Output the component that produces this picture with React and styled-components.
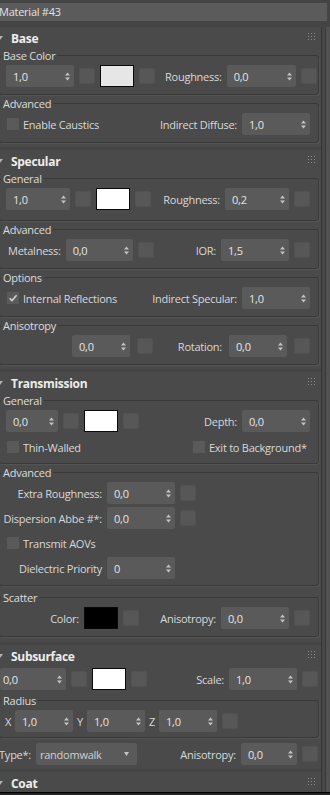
import React from 'react';
import styled, { createGlobalStyle } from 'styled-components';

const GlobalStyle = createGlobalStyle`
  html, body {
    margin: 0;
    padding: 0;
    background: #444444;
  }
  body {
    font-family: "Open Sans", "Noto Sans", sans-serif;
    font-size: 11px;
    letter-spacing: -0.25px;
    color: #dadada;
  }
`;

const Editor = styled.div`
  width: 330px;
  height: 795px;
  display: flex;
  flex-direction: column;
  overflow: hidden;
  background: #444444;
`;

const NameField = styled.div`
  flex-shrink: 0;
  height: 18px;
  margin: 3px 3px 0 0;
  background: #5b5b5b;
  line-height: 18px;
  color: #e2e2e2;
  text-indent: -1px;
`;

const Main = styled.div`
  flex: 1;
  min-height: 0;
  display: flex;
  margin-top: 6px;
`;

const Panels = styled.div`
  width: 321px;
  flex-shrink: 0;
  display: flex;
  flex-direction: column;
  gap: 3px;
  overflow: hidden;
`;

const ScrollTrack = styled.div`
  flex: 1;
  display: flex;
  justify-content: flex-end;
  border-left: 1px solid #333333;
  background: #474747;
`;

const ScrollThumb = styled.div`
  width: 4px;
  border-left: 1px solid #3a3a3a;
  background: #515151;
`;

const BottomEdge = styled.div`
  flex-shrink: 0;
  height: 2px;
  border-top: 1px solid #000000;
  background: #232323;
`;

/* rollouts */

const RolloutBox = styled.section`
  flex-shrink: 0;
  background: #4a4a4a;
  padding-bottom: ${p => p.$pb ?? 4}px;
  overflow: hidden;
`;

const RolloutHeader = styled.div`
  height: 22px;
  display: flex;
  align-items: center;
  padding-right: 6px;
`;

const Twisty = styled.span`
  width: 0;
  height: 0;
  border-left: 3.5px solid transparent;
  border-right: 3.5px solid transparent;
  border-top: 4px solid #b4b4b4;
  margin-left: -3px;
  margin-right: 8px;
`;

const RolloutTitle = styled.span`
  font-size: 12px;
  font-weight: 700;
  letter-spacing: -0.3px;
  color: #ededed;
`;

const GripIcon = styled.svg`
  margin-left: auto;
  align-self: flex-start;
  margin-top: 6px;
`;

const Grip = () => (
  <GripIcon width="7" height="7" viewBox="0 0 7 7">
    {[0, 3, 6].map(y =>
      [0, 3, 6].map(x => <rect key={`${x}-${y}`} x={x} y={y} width="1" height="1" fill="#8c8c8c" />)
    )}
  </GripIcon>
);

const Rollout = ({ title, pb, children }) => (
  <RolloutBox $pb={pb}>
    <RolloutHeader>
      <Twisty />
      <RolloutTitle>{title}</RolloutTitle>
      <Grip />
    </RolloutHeader>
    {children}
  </RolloutBox>
);

/* group boxes */

const GroupBox = styled.fieldset`
  min-width: 0;
  margin: ${p => p.$mt}px 2px 0 -1px;
  padding: 3px 0 ${p => p.$pb}px 0;
  border: 1px solid #393939;
  border-radius: 3px;
  box-shadow: 1px 1px 0 #545454;
`;

const GroupTitle = styled.legend`
  margin-left: 1px;
  padding: 0 2px;
  font-size: 11px;
  line-height: 13px;
  color: #dcdcdc;
`;

const GroupBody = styled.div`
  display: flex;
  flex-direction: column;
  gap: ${p => p.$gap}px;
`;

const Group = ({ title, mt = 2, pb = 7, gap = 3, children }) => (
  <GroupBox $mt={mt} $pb={pb}>
    <GroupTitle>{title}</GroupTitle>
    <GroupBody $gap={gap}>{children}</GroupBody>
  </GroupBox>
);

/* controls */

const Row = styled.div`
  display: flex;
  align-items: center;
  height: 22px;
  margin-top: ${p => p.$mt ?? 0}px;
  padding: 0 ${p => p.$pr ?? 8}px 0 ${p => p.$pl ?? 0}px;
  gap: ${p => p.$gap ?? 5}px;
`;

const Spacer = styled.div`
  flex: 1;
`;

const Label = styled.span`
  flex-shrink: 0;
  white-space: nowrap;
  color: #d8d8d8;
  ${p => p.$w && `
    width: ${p.$w}px;
    display: flex;
    justify-content: ${p.$align === 'center' ? 'center' : p.$align === 'left' ? 'flex-start' : 'flex-end'};
  `}
`;

const SpinBox = styled.div`
  box-sizing: border-box;
  flex-shrink: 0;
  width: ${p => p.$w}px;
  height: 22px;
  display: flex;
  align-items: center;
  padding: 0 4px 0 ${p => p.$pl ?? 7}px;
  background: #5a5a5a;
  border-radius: 2px;
  color: #e4e4e4;
`;

const SpinValue = styled.span`
  flex: 1;
`;

const Spinner = ({ w, value, pl }) => (
  <SpinBox $w={w} $pl={pl}>
    <SpinValue>{value}</SpinValue>
    <svg width="5" height="9" viewBox="0 0 5 9">
      <path d="M0 3.5 2.5 0.5 5 3.5Z M0 5.5 2.5 8.5 5 5.5Z" fill="#c4c4c4" />
    </svg>
  </SpinBox>
);

const MapButton = styled.div`
  flex-shrink: 0;
  width: 16px;
  height: 16px;
  margin-left: ${p => p.$ml ?? 0}px;
  border-radius: 3px;
  background: #575757;
  box-shadow: inset 0 0 0 1px #525252;
`;

const Swatch = styled.div`
  box-sizing: border-box;
  flex-shrink: 0;
  width: ${p => p.$w ?? 34}px;
  height: 22px;
  border: 1px solid #0a0a0a;
  background: ${p => p.$color};
`;

const CheckItem = styled.label`
  flex-shrink: 0;
  display: flex;
  align-items: center;
  gap: 4px;
  ${p => p.$w && `width: ${p.$w}px;`}
  color: #d8d8d8;
  white-space: nowrap;
`;

const CheckBox = styled.span`
  flex-shrink: 0;
  width: 12px;
  height: 12px;
  display: flex;
  align-items: center;
  justify-content: center;
  background: #5a5a5a;
`;

const Check = ({ checked, children, w }) => (
  <CheckItem $w={w}>
    <CheckBox>
      {checked && (
        <svg width="12" height="12" viewBox="0 0 12 12">
          <path d="M2.6 6.2 5 8.6 9.6 3.2" fill="none" stroke="#d2d2d2" strokeWidth="1.6" />
        </svg>
      )}
    </CheckBox>
    {children}
  </CheckItem>
);

const DropBox = styled.div`
  box-sizing: border-box;
  flex-shrink: 0;
  width: ${p => p.$w}px;
  height: 22px;
  display: flex;
  align-items: center;
  padding: 0 8px 0 4px;
  background: #5a5a5a;
  border-radius: 2px;
  color: #cfcfcf;
`;

const Dropdown = ({ w, value }) => (
  <DropBox $w={w}>
    <SpinValue>{value}</SpinValue>
    <svg width="5" height="4" viewBox="0 0 5 4">
      <path d="M0 0 5 0 2.5 4Z" fill="#c4c4c4" />
    </svg>
  </DropBox>
);

export default function App() {
  return (
    <>
      <GlobalStyle />
      <Editor>
        <NameField>Material #43</NameField>
        <Main>
          <Panels>
            <Rollout title="Base">
              <Group title="Base Color" mt={0}>
                <Row $pl={6}>
                  <Spinner w={68} value="1,0" />
                  <MapButton />
                  <Swatch $color="#e6e6e6" />
                  <MapButton />
                  <Spacer />
                  <Label>Roughness:</Label>
                  <Spinner w={69} value="0,0" />
                  <MapButton />
                </Row>
              </Group>
              <Group title="Advanced">
                <Row $pl={7}>
                  <Check>Enable Caustics</Check>
                  <Spacer />
                  <Label>Indirect Diffuse:</Label>
                  <Spinner w={68} value="1,0" />
                </Row>
              </Group>
            </Rollout>

            <Rollout title="Specular">
              <Group title="General" mt={0} pb={10}>
                <Row $pl={6}>
                  <Spinner w={64} value="1,0" />
                  <MapButton />
                  <Swatch $color="#ffffff" />
                  <MapButton />
                  <Spacer />
                  <Label>Roughness:</Label>
                  <Spinner w={64} value="0,2" />
                  <MapButton />
                </Row>
              </Group>
              <Group title="Advanced">
                <Row $pl={8}>
                  <Label>Metalness:</Label>
                  <Spinner w={67} value="0,0" />
                  <MapButton />
                  <Spacer />
                  <Label>IOR:</Label>
                  <Spinner w={68} value="1,5" />
                  <MapButton />
                </Row>
              </Group>
              <Group title="Options">
                <Row $pl={7}>
                  <Check checked>Internal Reflections</Check>
                  <Spacer />
                  <Label>Indirect Specular:</Label>
                  <Spinner w={68} value="1,0" />
                </Row>
              </Group>
              <Group title="Anisotropy">
                <Row $pl={72} $gap={7}>
                  <Spinner w={58} value="0,0" />
                  <MapButton />
                  <Spacer />
                  <Label>Rotation:</Label>
                  <Spinner w={58} value="0,0" />
                  <MapButton />
                </Row>
              </Group>
            </Rollout>

            <Rollout title="Transmission" pb={5}>
              <Group title="General" mt={0} gap={4} pb={5}>
                <Row $pl={6}>
                  <Spinner w={52} value="0,0" />
                  <MapButton />
                  <Swatch $color="#ffffff" />
                  <MapButton />
                  <Spacer />
                  <Label>Depth:</Label>
                  <Spinner w={68} value="0,0" />
                </Row>
                <Row $pl={7} $gap={0}>
                  <Check w={186}>Thin-Walled</Check>
                  <Check>Exit to Background*</Check>
                </Row>
              </Group>
              <Group title="Advanced" pb={6}>
                <Row>
                  <Label $w={102}>Extra Roughness:</Label>
                  <Spinner w={68} value="0,0" />
                  <MapButton />
                </Row>
                <Row>
                  <Label $w={102}>Dispersion Abbe #*:</Label>
                  <Spinner w={68} value="0,0" />
                  <MapButton />
                </Row>
                <Row $pl={7}>
                  <Check>Transmit AOVs</Check>
                </Row>
                <Row>
                  <Label $w={102}>Dielectric Priority</Label>
                  <Spinner w={68} value="0" />
                </Row>
              </Group>
              <Group title="Scatter" mt={5}>
                <Row>
                  <Label $w={79}>Color:</Label>
                  <Swatch $color="#000000" />
                  <MapButton />
                  <Spacer />
                  <Label>Anisotropy:</Label>
                  <Spinner w={68} value="0,0" />
                  <MapButton />
                </Row>
              </Group>
            </Rollout>

            <Rollout title="Subsurface">
              <Row $mt={1} $pr={3}>
                <Spinner w={66} pl={3} value="0,0" />
                <MapButton />
                <Swatch $color="#ffffff" />
                <MapButton />
                <Spacer />
                <Label>Scale:</Label>
                <Spinner w={68} value="1,0" />
                <MapButton />
              </Row>
              <Group title="Radius" mt={4} pb={5}>
                <Row $pl={1} $gap={0}>
                  <Label $w={14} $align="center">X</Label>
                  <Spinner w={58} value="1,0" />
                  <Label $w={14} $align="center">Y</Label>
                  <Spinner w={58} value="1,0" />
                  <Label $w={14} $align="center">Z</Label>
                  <Spinner w={58} value="1,0" />
                  <MapButton $ml={5} />
                </Row>
              </Group>
              <Row $mt={5} $pr={3}>
                <Label $w={31}>Type*:</Label>
                <Dropdown w={101} value="randomwalk" />
                <Spacer />
                <Label>Anisotropy:</Label>
                <Spinner w={56} value="0,0" />
                <MapButton />
              </Row>
            </Rollout>

            <Rollout title="Coat" pb={0} />
          </Panels>
          <ScrollTrack>
            <ScrollThumb />
          </ScrollTrack>
        </Main>
        <BottomEdge />
      </Editor>
    </>
  );
}
